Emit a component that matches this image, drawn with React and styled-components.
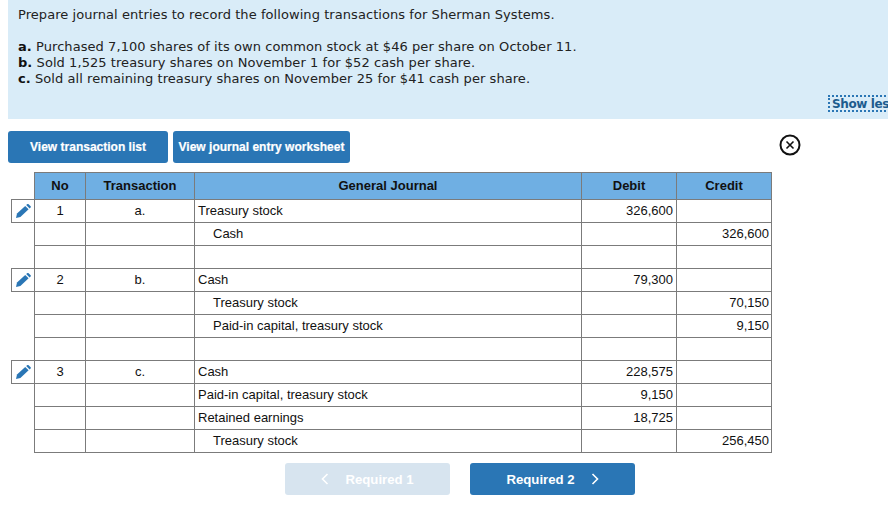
import React from "react";
import styled, { createGlobalStyle } from "styled-components";

const Global = createGlobalStyle`
  html, body { margin: 0; padding: 0; background: #fff; overflow: hidden; }
  body { width: 888px; height: 517px; font-family: "Liberation Sans", Arial, sans-serif; }
`;
const Page = styled.div`width: 888px; height: 517px; overflow: hidden;`;
const Panel = styled.section`
  margin-left: 8px; height: 119px; box-sizing: border-box; background: #d9ecf8;
  padding: 7px 0 0 10px; font: 13px/16px "DejaVu Sans", Verdana, sans-serif; letter-spacing: 0.065px; color: #222; position: relative;
`;
const Para = styled.p`margin: 0 0 16px;`;
const Line = styled.div``;
const Letter = styled.b`color: #111;`;
const ShowLess = styled.span`
  position: absolute; left: 820px; top: 95px; width: 70px; height: 17px; box-sizing: border-box;
  border: 2px dotted #2a76b5; border-right: 0; font-weight: 700; color: #1d5c8e; font-size: 12px; letter-spacing: -0.4px; line-height: 15px; padding-left: 2px; white-space: nowrap;
`;
const Toolbar = styled.div`
  display: flex; align-items: center; margin: 12px 87px 0 8px; gap: 5px; height: 32px;
`;
const TabButton = styled.button`
  height: 32px; width: ${p => p.$w}px; padding: 0; border: 0; border-radius: 3px; background: #2a76b5; color: #fff;
  font: 700 12px "Liberation Sans", Arial, sans-serif; -webkit-text-stroke: 0.2px #fff;
`;
const Close = styled.svg`margin: 0 0 4px auto; width: 22px; height: 22px; display: block;`;
const TableWrap = styled.div`margin: 9px 0 0 11px;`;
const Table = styled.table`
  border-collapse: collapse; table-layout: fixed; width: 760px; font-size: 13px; color: #111;
`;
const Th = styled.th`
  height: 27px; padding: 0 0 2px; box-sizing: border-box; background: #6fafe3; border: 1px solid #7b7b7b; font-weight: 700; font-size: 13px; color: #111;
`;
const Blank = styled.td`border: 0; padding: 0;`;
const Td = styled.td`
  height: 23px; padding: 0 ${p => p.$pr || 2}px 0 3px; box-sizing: border-box; border: 1px solid #7b7b7b;
  text-align: ${p => p.$align || "left"}; line-height: 20px; white-space: nowrap;
  padding-left: ${p => (p.$indent ? "18px" : p.$align ? "2px" : "3px")};
`;
const EditCell = styled.td`
  height: 23px; padding: 0; box-sizing: border-box; border: 1px solid #7b7b7b; text-align: center; color: #2a76b5; line-height: 0;
`;
const Nav = styled.nav`display: flex; gap: 20px; margin: 10px 0 0 285px;`;
const NavButton = styled.button`
  width: 165px; height: 32px; border: 0; border-radius: 3px; padding: 0; display: flex; align-items: center; justify-content: center; gap: 16px;
  background: ${p => (p.$disabled ? "#d7e4ef" : "#2a76b5")}; color: #fff;
  font: 700 13.2px "Liberation Sans", Arial, sans-serif;
`;

const rows = [
  { no: "1", tr: "a.", acct: "Treasury stock", debit: "326,600" },
  { acct: "Cash", indent: true, credit: "326,600" },
  {},
  { no: "2", tr: "b.", acct: "Cash", debit: "79,300" },
  { acct: "Treasury stock", indent: true, credit: "70,150" },
  { acct: "Paid-in capital, treasury stock", indent: true, credit: "9,150" },
  {},
  { no: "3", tr: "c.", acct: "Cash", debit: "228,575" },
  { acct: "Paid-in capital, treasury stock", debit: "9,150" },
  { acct: "Retained earnings", debit: "18,725" },
  { acct: "Treasury stock", indent: true, credit: "256,450" },
];

const Chevron = ({ left }) => (
  <svg width="8" height="12" viewBox="0 0 8 12" fill="none" stroke="currentColor" strokeWidth="1.6">
    <path d={left ? "M6.5 1 1.5 6l5 5" : "M1.5 1l5 5-5 5"} />
  </svg>
);

const Pencil = () => (
  <svg width="15" height="14" viewBox="0 0 15 14" fill="#2a76b5">
    <path d="M0 14 1 9.6 9.2 1.9 12.6 5.3 4.4 13Z" />
    <path d="M10.2 1 11.4.1Q12 -.2 12.6.2L14.6 2.2Q15.1 2.9 14.6 3.4L13.6 4.4Z" />
  </svg>
);

export default function App() {
  return (
    <Page>
      <Global />
      <Panel>
        <Para>Prepare journal entries to record the following transactions for Sherman Systems.</Para>
        <Line><Letter>a.</Letter> Purchased 7,100 shares of its own common stock at $46 per share on October 11.</Line>
        <Line><Letter>b.</Letter> Sold 1,525 treasury shares on November 1 for $52 cash per share.</Line>
        <Line><Letter>c.</Letter> Sold all remaining treasury shares on November 25 for $41 cash per share.</Line>
        <ShowLess>Show less</ShowLess>
      </Panel>
      <Toolbar>
        <TabButton $w={160}>View transaction list</TabButton>
        <TabButton $w={177}>View journal entry worksheet</TabButton>
        <Close viewBox="0 0 22 22" fill="none" stroke="#111">
          <circle cx="11" cy="11" r="9.5" strokeWidth="2" />
          <path d="M7.5 7.5l7 7M14.5 7.5l-7 7" strokeWidth="1.6" />
        </Close>
      </Toolbar>
      <TableWrap>
        <Table>
          <colgroup>
            <col style={{ width: 23 }} /><col style={{ width: 51 }} /><col style={{ width: 109 }} />
            <col style={{ width: 387 }} /><col style={{ width: 95 }} /><col style={{ width: 95 }} />
          </colgroup>
          <thead>
            <tr>
              <Blank /><Th>No</Th><Th>Transaction</Th><Th>General Journal</Th><Th>Debit</Th><Th>Credit</Th>
            </tr>
          </thead>
          <tbody>
            {rows.map((r, i) => (
              <tr key={i}>
                {r.no ? <EditCell><Pencil /></EditCell> : <Blank />}
                <Td $align="center">{r.no}</Td>
                <Td $align="center">{r.tr}</Td>
                <Td $indent={r.indent}>{r.acct}</Td>
                <Td $align="right" $pr={3}>{r.debit}</Td>
                <Td $align="right">{r.credit}</Td>
              </tr>
            ))}
          </tbody>
        </Table>
      </TableWrap>
      <Nav>
        <NavButton $disabled><Chevron left />Required 1</NavButton>
        <NavButton>Required 2<Chevron /></NavButton>
      </Nav>
    </Page>
  );
}
